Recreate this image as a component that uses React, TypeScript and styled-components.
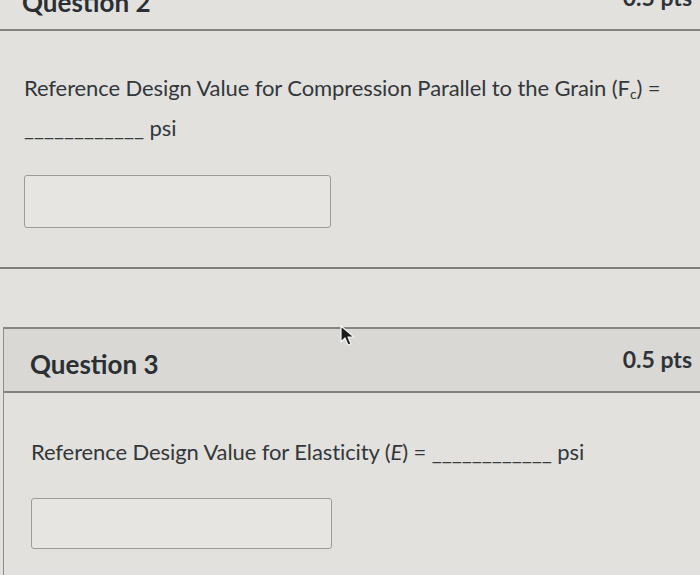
import React from "react";
import styled, { createGlobalStyle } from "styled-components";

const GlobalStyle = createGlobalStyle`
  html, body {
    margin: 0;
    padding: 0;
    background: #e2e1dd;
    overflow: hidden;
  }
  body {
    font-family: Lato, "Liberation Sans", sans-serif;
    color: #2e3236;
  }
`;

const Page = styled.div`
  position: relative;
  width: 700px;
  height: 575px;
  overflow: hidden;
`;

const Sheet = styled.div`
  margin-top: -33px;
  display: flex;
  flex-direction: column;
  gap: 58px;
`;

const Card = styled.section<{ $inset: number }>`
  border-left: ${(p) => (p.$inset > 0 ? "1px solid #8c8c8a" : "none")};
  margin-left: ${(p) => p.$inset}px;
  border-bottom: 2px solid #7e7e7c;
`;

const Header = styled.header<{ $shade?: boolean }>`
  height: ${(p) => (p.$shade ? 66 : 64)}px;
  display: flex;
  align-items: center;
  justify-content: space-between;
  padding: 0 8px 0 ${(p) => (p.$shade ? 26 : 22)}px;
  background: ${(p) => (p.$shade ? "#d9d8d4" : "transparent")};
  border-top: ${(p) => (p.$shade ? "2px solid #858583" : "none")};
  border-bottom: 2px solid #828280;
  box-sizing: border-box;
`;

const Title = styled.h2`
  margin: 8px 0 0;
  font-size: 26px;
  font-weight: 700;
  color: #2b2f33;
`;

const Points = styled.span`
  margin-bottom: 2px;
  font-size: 23px;
  font-weight: 700;
  color: #2f3337;
`;

const Body = styled.div<{ $pad: number; $top: number; $bottom: number }>`
  padding: ${(p) => p.$top}px 0 ${(p) => p.$bottom}px ${(p) => p.$pad}px;
`;

const Prompt = styled.p<{ $lh: number }>`
  margin: 0;
  font-size: 22px;
  line-height: ${(p) => p.$lh}px;
  color: #33373b;
  letter-spacing: -0.1px;
`;

const Blank = styled.span`
  color: #3a3d40;
`;

const Sub = styled.sub`
  font-size: 14px;
  line-height: 0;
  vertical-align: -3px;
`;

const Answer = styled.div<{ $width: number; $height: number; $gap: number }>`
  margin-top: ${(p) => p.$gap}px;
  width: ${(p) => p.$width}px;
  height: ${(p) => p.$height}px;
  border: 1px solid #9b9b99;
  border-radius: 3px;
  background: #e6e5e2;
  box-sizing: border-box;
`;

const Pointer = styled.svg`
  position: absolute;
  left: 339px;
  top: 325px;
`;

const blank = "____________";

export default function App() {
  return (
    <Page>
      <GlobalStyle />
      <Sheet>
        <Card $inset={0}>
          <Header>
            <Title>Question 2</Title>
            <Points>0.5 pts</Points>
          </Header>
          <Body $pad={24} $top={37} $bottom={39}>
            <Prompt $lh={40}>
              Reference Design Value for Compression Parallel to the Grain (F
              <Sub>c</Sub>) =
              <br />
              <Blank>{blank}</Blank> psi
            </Prompt>
            <Answer $width={307} $height={53} $gap={27} />
          </Body>
        </Card>
        <Card $inset={3}>
          <Header $shade>
            <Title>Question 3</Title>
            <Points>0.5 pts</Points>
          </Header>
          <Body $pad={27} $top={39} $bottom={40}>
            <Prompt $lh={40}>
              Reference Design Value for Elasticity (<i>E</i>) ={" "}
              <Blank>{blank}</Blank> psi
            </Prompt>
            <Answer $width={301} $height={51} $gap={26} />
          </Body>
        </Card>
      </Sheet>
      <Pointer width="18" height="22" viewBox="0 0 18 22">
        <path
          d="M2 1 L2 17 L6 13 L9 20 L12 19 L9 12 L15 12 Z"
          fill="#1c1c1c"
          stroke="#f4f4f4"
          strokeWidth="1.2"
          strokeLinejoin="round"
        />
      </Pointer>
    </Page>
  );
}
